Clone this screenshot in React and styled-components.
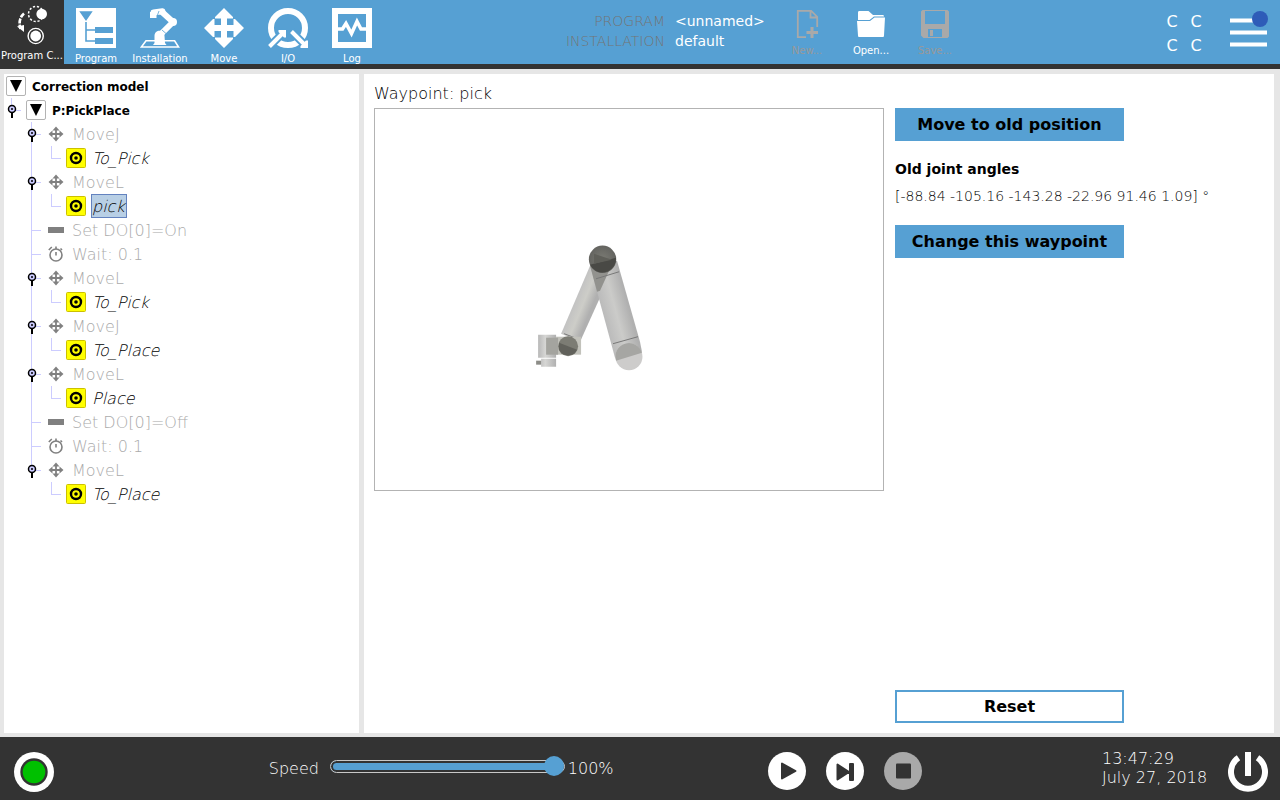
import React, { useState } from 'react';
import styled, { createGlobalStyle } from 'styled-components';

const BLUE = '#56a0d3';
const DARK = '#333333';
const LIGHT_FONT = "'DejaVu Sans Light', 'DejaVu Sans', Verdana, sans-serif";

const GlobalStyle = createGlobalStyle`
  * { box-sizing: border-box; }
  body {
    margin: 0;
    font-family: 'DejaVu Sans', Verdana, sans-serif;
    font-size: 16px;
    color: #000;
    background: #e6e6e6;
  }
  button {
    font-family: inherit;
    padding: 0;
    border: none;
    background: none;
    cursor: pointer;
  }
  svg { display: block; flex-shrink: 0; }
`;

const Screen = styled.div`
  display: flex;
  flex-direction: column;
  min-height: 100vh;
`;

/* header */

const Header = styled.header`
  display: flex;
  background: ${BLUE};
  border-bottom: 5px solid ${DARK};
  color: #fff;
`;

const Tabs = styled.nav`
  display: flex;
`;

const Tab = styled.button`
  display: flex;
  flex-direction: column;
  align-items: center;
  width: 64px;
  height: 64px;
  padding-top: ${props => (props.$active ? 5 : 8)}px;
  background: ${props => (props.$active ? DARK : 'transparent')};
  color: #fff;
  font-size: 10px;
  line-height: 22px;
  white-space: nowrap;
`;

const FileArea = styled.div`
  flex: 1;
  display: flex;
  justify-content: center;
`;

const FileInfo = styled.dl`
  display: grid;
  grid-template-columns: 96px 100px;
  column-gap: 10px;
  grid-auto-rows: 20px;
  margin: 0;
  padding-top: 11px;
  font-size: 14px;
  line-height: 20px;
`;

const InfoName = styled.dt`
  justify-self: end;
  color: #747474;
  font-family: ${LIGHT_FONT};
  font-weight: 200;
`;

const InfoValue = styled.dd`
  margin: 0;
`;

const FileButton = styled.button`
  display: flex;
  flex-direction: column;
  align-items: center;
  width: 64px;
  padding-top: 10px;
  color: ${props => (props.disabled ? '#999999' : '#fff')};
  font-size: 10px;
  line-height: 24px;
`;

const Checksum = styled.div`
  display: grid;
  grid-template-columns: 24px 24px;
  grid-auto-rows: 24px;
  align-content: center;
  justify-content: center;
  width: 64px;
  padding-top: 3px;
  text-align: center;
  line-height: 24px;
`;

const MenuButton = styled.button`
  width: 64px;
  height: 64px;
`;

/* main area */

const Main = styled.main`
  flex: 1;
  display: flex;
  gap: 5px;
  padding: 5px 6px 4px 4px;
`;

const TreePanel = styled.ul`
  flex: 0 0 355px;
  margin: 0;
  padding: 0 2px;
  list-style: none;
  background: #fff;
`;

const TreeRow = styled.li`
  display: flex;
  align-items: center;
  height: 24px;
`;

const IconSlot = styled.span`
  display: flex;
  align-items: center;
  justify-content: center;
  width: 20px;
  height: 20px;
  margin-right: 5px;
`;

const Toggle = styled.button`
  display: flex;
  align-items: center;
  justify-content: center;
  width: 20px;
  height: 20px;
  border: 1px solid #b3b3b3;
  border-radius: 2px;
`;

const NodeLabel = styled.span`
  padding: 2px 1px 0 0;
  border: 1px solid ${props => (props.$selected ? '#6382bf' : 'transparent')};
  background: ${props => (props.$selected ? '#b8cfe5' : 'transparent')};
  color: ${props => (props.$kind === 'command' ? '#aaaaaa' : '#000')};
  font-family: ${props => (props.$kind === 'folder' ? 'inherit' : LIGHT_FONT)};
  font-size: ${props => (props.$kind === 'folder' ? 12 : 16)}px;
  font-weight: ${props => (props.$kind === 'folder' ? 700 : 200)};
  font-style: ${props => (props.$kind === 'waypoint' ? 'italic' : 'normal')};
  line-height: 20px;
  white-space: nowrap;
`;

const Detail = styled.section`
  flex: 1;
  display: grid;
  grid-template-columns: minmax(0, 1fr) 379px;
  grid-template-rows: 34px 1fr;
  column-gap: 11px;
  padding: 0 0 10px 10px;
  background: #fff;
`;

const Title = styled.h1`
  grid-column: 1 / -1;
  margin: 0;
  font-family: ${LIGHT_FONT};
  font-size: 16px;
  font-weight: 200;
  line-height: 40px;
`;

const Viewer = styled.div`
  align-self: start;
  aspect-ratio: 4 / 3;
  border: 1px solid #b3b3b3;

  svg { width: 100%; height: 100%; }
`;

const Actions = styled.div`
  display: flex;
  flex-direction: column;
  align-items: flex-start;
`;

const ActionButton = styled.button`
  width: 229px;
  height: 33px;
  border: 2px solid ${BLUE};
  background: ${props => (props.$outline ? '#fff' : BLUE)};
  color: #000;
  font-size: 16px;
  font-weight: 700;
`;

const JointAngles = styled.div`
  padding: 18px 0 19px;
  font-size: 14px;
  line-height: 20px;

  h2 { margin: 0 0 7px; font-size: 14px; }
  p { margin: 0; font-family: ${LIGHT_FONT}; font-weight: 200; }
`;

const ResetSlot = styled.div`
  margin-top: auto;
`;

/* footer */

const Footer = styled.footer`
  display: grid;
  grid-template-columns: 21% 39% 1fr 178px;
  align-items: center;
  height: 63px;
  padding-top: 6px;
  background: ${DARK};
  color: #fff;
  font-family: ${LIGHT_FONT};
  font-weight: 200;
`;

const StatusButton = styled.button`
  width: 40px;
  height: 40px;
  margin-left: 14px;
`;

const SpeedControl = styled.div`
  display: flex;
  align-items: center;
  height: 40px;
  padding-bottom: 11px;

  output { padding: 4px 0 0 3px; }
  label { width: 61px; padding-top: 4px; }
`;

const Slider = styled.input`
  appearance: none;
  width: 235px;
  height: 20px;
  margin: 0;
  background: transparent;

  &::-webkit-slider-runnable-track {
    height: 13px;
    border: 1px solid #c8c8c8;
    border-radius: 7px;
    background: linear-gradient(${BLUE}, ${BLUE}) no-repeat left / ${props => props.value}% 100% ${DARK};
    box-shadow: inset 0 0 0 2px ${DARK};
  }

  &::-webkit-slider-thumb {
    appearance: none;
    width: 20px;
    height: 20px;
    margin-top: -5px;
    border-radius: 50%;
    background: ${BLUE};
  }
`;

const Playback = styled.div`
  display: flex;
  gap: 20px;
  padding-bottom: 2px;
`;

const RoundButton = styled.button`
  width: 38px;
  height: 38px;
  border-radius: 50%;
  background: ${props => (props.disabled ? '#a9a9a9' : '#fff')};
`;

const Clock = styled.div`
  display: flex;
  justify-content: space-between;
  align-items: center;
  padding-right: 12px;

  time { padding-bottom: 8px; line-height: 19px; white-space: nowrap; }
`;

/* icons */

const CorrectionIcon = () => (
  <svg width="40" height="40" viewBox="0 0 40 40" fill="none" stroke="#fff">
    <circle cx="24" cy="9" r="7.5" strokeWidth="1.5" strokeDasharray="2.2 1.8" />
    <circle cx="29.7" cy="9" r="5.3" fill="#fff" stroke="none" />
    <circle cx="23.7" cy="31" r="7.6" strokeWidth="1.4" />
    <circle cx="23.7" cy="31" r="5.4" fill="#fff" stroke="none" />
    <path d="M12 8.5C8 12 6.500 17 8.5 24" strokeWidth="2.6" strokeDasharray="5 1.2" />
    <path d="M5 21.500l7 5.500V20z" fill="#fff" stroke="none" />
  </svg>
);

const ProgramIcon = () => (
  <svg width="40" height="40" viewBox="0 0 40 40">
    <path fill="#fff" d="M0 0h40v40H0z" />
    <path fill={BLUE} d="M3.3 3.3h13.4L10 13zM19 19h18v6H19zM19 30h18v6H19z" />
    <path fill="none" stroke={BLUE} strokeWidth="1.6" d="M10 14v19h9M10 22h9" />
  </svg>
);

const InstallationIcon = () => (
  <svg width="40" height="40" viewBox="0 0 40 40">
    <path fill="none" stroke="#fff" strokeWidth="1.6" d="M6 32.8h28.6l4 6.2H1.4z" />
    <path fill="#fff" d="M14.500 28c0-7 10-7 10 0l.5 7 1.500 2H13l1.500-2z" />
    <path fill="none" stroke="#fff" strokeWidth="6" strokeLinecap="round" d="M13.500 4.500l9-1.200" />
    <path fill="none" stroke="#fff" strokeWidth="6" strokeLinejoin="round" d="M22 4l11 10-13 13" />
    <circle cx="33" cy="14" r="4" fill="#fff" />
    <path fill="#fff" d="M10 4h6.500v6H10z" />
    <path stroke={BLUE} strokeWidth=".8" d="M17.500 7l1.500-4M22 22l4 3.500" />
  </svg>
);

const MoveIcon = () => (
  <svg width="40" height="40" viewBox="0 0 40 40" fill="#fff">
    <path d="M20 0l9 9v1.500h-6V17h6.500v-6H31l9 9-9 9h-1.500v-6H23v6.500h6V31l-9 9-9-9v-1.500h6V23h-6.500v6H9l-9-9 9-9h1.500v6H17v-6.500h-6V9z" />
  </svg>
);

const IoIcon = () => (
  <svg width="40" height="40" viewBox="0 0 40 40" fill="none">
    <circle cx="20" cy="20" r="17" stroke="#fff" strokeWidth="6" />
    <path stroke={BLUE} strokeWidth="8" d="M0 40l17-17M23 23l17 17" />
    <path stroke="#fff" strokeWidth="4" d="M1.500 38.500L15 25M23.500 23.500L37 37" />
    <path fill="#fff" d="M10.500 22H18v7.500h-2l-5.500-5.500zM40 32.500V40h-7.500v-2l5.500-5.500z" />
  </svg>
);

const LogIcon = () => (
  <svg width="40" height="40" viewBox="0 0 40 40" fill="none" stroke="#fff">
    <path strokeWidth="6" d="M3 3h34v34H3z" />
    <path strokeWidth="3.5" d="M5 21h5.500l3.500-5.500 5.500 10L25 13.500l4 7.500h6" />
  </svg>
);

const NewIcon = () => (
  <svg width="28" height="29" viewBox="0 0 28 29" fill="none" stroke="#a9a9a9" strokeWidth="1.8">
    <path d="M13 27.200H4.800V.9h13.400l6 6V17M17.500 1v6.500H24" />
    <path strokeWidth="3" d="M19 17v11M13.500 22.500H25" />
  </svg>
);

const OpenIcon = () => (
  <svg width="28" height="29" viewBox="0 0 28 29" fill="#fff">
    <path d="M1 10V2.500C1 1.500 1.500 1 2.500 1h9l4.500 4h9.500c1 0 1.500.5 1.500 1.500H17l-4.500 3.500z" />
    <path d="M0 11h13l4.500-3.500H28L27 25.500c0 1-.5 1.500-1.500 1.500h-23C1.500 27 1 26.500 1 25.500z" />
  </svg>
);

const SaveIcon = () => (
  <svg width="28" height="29" viewBox="0 0 28 29">
    <path fill="#a9a9a9" fillRule="evenodd" d="M1.500 0h25L28 1.500v25L26.500 28H2.500L0 25.500v-24zM4 1v13h20V1zM7 19v8h14v-8zM9 20h3v6H9z" />
  </svg>
);

const MenuIcon = () => (
  <svg width="64" height="64" viewBox="0 0 64 64">
    <path stroke="#fff" strokeWidth="4" d="M14 20.500h37M14 32.500h37M14 44.500h37" />
    <circle cx="44" cy="19" r="8" fill="#2e5cb8" />
  </svg>
);

const ArrowDown = () => (
  <svg width="14" height="12" viewBox="0 0 14 12">
    <path d="M1 0h12L7 12z" />
  </svg>
);

const SmallMoveIcon = () => (
  <svg width="16" height="16" viewBox="0 0 16 16">
    <path stroke="#808080" strokeWidth="1.8" d="M8 2v12M2 8h12" />
    <path fill="#808080" d="M8 .5l3.500 4h-7zM8 15.500l3.500-4h-7zM.5 8l4-3.500v7zM15.500 8l-4-3.500v7z" />
  </svg>
);

const SetIcon = () => (
  <svg width="16" height="16" viewBox="0 0 16 16">
    <path fill="#808080" d="M0 5h16v6H0z" />
  </svg>
);

const WaitIcon = () => (
  <svg width="16" height="16" viewBox="0 0 16 16" fill="none" stroke="#808080" strokeWidth="1.6">
    <circle cx="8" cy="9" r="6" />
    <path d="M8 .5V3M8 6v3.500M.8 4l3-3M12.500 2.500L14 4" />
  </svg>
);

const WaypointIcon = () => (
  <svg width="20" height="20" viewBox="0 0 20 20">
    <rect x=".5" y=".5" width="19" height="19" rx="1" fill="#ffff00" stroke="#ccc000" />
    <circle cx="10" cy="10" r="5" fill="none" stroke="#000" strokeWidth="2.4" />
    <circle cx="10" cy="10" r="1.8" />
  </svg>
);

const PlayIcon = () => (
  <svg width="38" height="38" viewBox="0 0 38 38" fill={DARK} stroke={DARK} strokeLinejoin="round">
    <path strokeWidth="2" d="M14 11.500v15L27.500 19z" />
  </svg>
);

const StepIcon = () => (
  <svg width="38" height="38" viewBox="0 0 38 38" fill={DARK} stroke={DARK} strokeLinejoin="round">
    <path strokeWidth="2" d="M11.500 12.500v15L23 20zM24 12h3v16h-3z" />
  </svg>
);

const StopIcon = () => (
  <svg width="38" height="38" viewBox="0 0 38 38" fill={DARK}>
    <rect x="12" y="11.5" width="15" height="15" rx="1" />
  </svg>
);

const PowerIcon = () => (
  <svg width="40" height="40" viewBox="0 0 40 40" fill="none" stroke="#fff" strokeWidth="6">
    <path d="M10.500 5.700a17 17 0 1 0 19 0M20 0v24" />
  </svg>
);

const StatusIcon = () => (
  <svg width="40" height="40" viewBox="0 0 40 40">
    <circle cx="20" cy="20" r="20" fill="#fff" />
    <circle cx="20" cy="20" r="13.7" fill={DARK} />
    <circle cx="20" cy="20" r="11.3" fill="#00c000" />
  </svg>
);

const RobotArm = () => (
  <svg viewBox="0 0 508 381" role="img" aria-label="Robot at the old position">
    <defs>
      <linearGradient id="upper" gradientUnits="userSpaceOnUse" x1="227" y1="203" x2="253" y2="196">
        <stop offset="0" stopColor="#bababa" />
        <stop offset=".5" stopColor="#cbcbc9" />
        <stop offset="1" stopColor="#b0b0b0" />
      </linearGradient>
      <linearGradient id="fore" gradientUnits="userSpaceOnUse" x1="199" y1="193" x2="216" y2="200">
        <stop offset="0" stopColor="#c2c2c2" />
        <stop offset=".5" stopColor="#cdcdc8" />
        <stop offset="1" stopColor="#b0b0b0" />
      </linearGradient>
      <linearGradient id="tool">
        <stop offset="0" stopColor="#b8b8b8" />
        <stop offset=".4" stopColor="#d6d6d4" />
        <stop offset="1" stopColor="#b0b0b0" />
      </linearGradient>
      <radialGradient id="joint">
        <stop offset="0" stopColor="#7b7b74" />
        <stop offset="1" stopColor="#646460" />
      </radialGradient>
    </defs>
    <path fill="url(#fore)" d="M215 157l23 3-33 73-19-8z" />
    <path fill="url(#upper)" d="M215 157l27-5 23 81 2 10-27 6z" />
    <path fill="#92928e" d="M215 157l7 26 3-1 10-22z" />
    <circle cx="254" cy="248" r="13.5" fill="#cdcccb" />
    <path fill="#a6a6a3" d="M241 252a13.500 13.500 0 0 1 26-8z" />
    <circle cx="227.5" cy="150.5" r="13.7" fill="url(#joint)" />
    <path fill="#494945" d="M215 156l26-7a13.700 13.700 0 0 1-24 10z" />
    <path fill="#5f5f59" d="M219 145l18 6-18 4z" />
    <path stroke="#777" strokeWidth="1" d="M221 170l23-7M238 235l25-7M189 225l16 6" />
    <path fill="#c2c2bb" d="M181 228h25v18h-25z" />
    <path fill="url(#tool)" d="M163 226h18v23h-18zM166 250h15v8h-15z" />
    <path fill="#a4a49f" d="M171 229h12v17h-12z" />
    <circle cx="193" cy="237.5" r="10" fill="#7c7c74" />
    <path fill="#61615b" d="M184 234l18 7a10 10 0 0 1-18 0z" />
    <path fill="#8c8c87" d="M161 252h5v4h-5z" />
  </svg>
);

/* program tree */

const nodes = [
  { id: 1, depth: 0, kind: 'folder', label: 'Correction model' },
  { id: 2, depth: 1, kind: 'folder', label: 'P:PickPlace' },
  { id: 3, depth: 2, kind: 'command', icon: 'move', label: 'MoveJ' },
  { id: 4, depth: 3, kind: 'waypoint', label: 'To_Pick' },
  { id: 5, depth: 2, kind: 'command', icon: 'move', label: 'MoveL' },
  { id: 6, depth: 3, kind: 'waypoint', label: 'pick' },
  { id: 7, depth: 2, kind: 'command', icon: 'set', label: 'Set DO[0]=On' },
  { id: 8, depth: 2, kind: 'command', icon: 'wait', label: 'Wait: 0.1' },
  { id: 9, depth: 2, kind: 'command', icon: 'move', label: 'MoveL' },
  { id: 10, depth: 3, kind: 'waypoint', label: 'To_Pick' },
  { id: 11, depth: 2, kind: 'command', icon: 'move', label: 'MoveJ' },
  { id: 12, depth: 3, kind: 'waypoint', label: 'To_Place' },
  { id: 13, depth: 2, kind: 'command', icon: 'move', label: 'MoveL' },
  { id: 14, depth: 3, kind: 'waypoint', label: 'Place' },
  { id: 15, depth: 2, kind: 'command', icon: 'set', label: 'Set DO[0]=Off' },
  { id: 16, depth: 2, kind: 'command', icon: 'wait', label: 'Wait: 0.1' },
  { id: 17, depth: 2, kind: 'command', icon: 'move', label: 'MoveL' },
  { id: 18, depth: 3, kind: 'waypoint', label: 'To_Place' },
];

const lastCommand = nodes.filter(n => n.depth === 2).pop().id;

const commandIcons = {
  move: <SmallMoveIcon />,
  set: <SetIcon />,
  wait: <WaitIcon />,
};

const Branches = ({ node }) => {
  const { id, depth } = node;
  if (depth === 0) return null;
  const x = depth * 20 - 14;
  const end = depth === 2 && id !== lastCommand ? 24 : 12;
  const hasHandle = depth === 1 || node.icon === 'move';
  return (
    <svg width={depth * 20} height="24" fill="none" stroke="#ccccff">
      <path d={`M${x - 0.5} 0V${end}M${x - 1} 12.5h10`} />
      {depth === 3 && id < lastCommand && <path d="M25.5 0v24" />}
      {hasHandle && (
        <g stroke="#000">
          <path strokeWidth="2" d={`M${x} 14v6`} />
          <circle cx={x} cy="11" r="3.5" fill="#ccccff" strokeWidth="1.5" />
          <circle cx={x} cy="11" r="1" fill="#000" stroke="none" />
        </g>
      )}
    </svg>
  );
};

const NodeIcon = ({ node }) => {
  if (node.kind === 'folder') {
    return <Toggle aria-label={`Collapse ${node.label}`}><ArrowDown /></Toggle>;
  }
  return node.kind === 'waypoint' ? <WaypointIcon /> : commandIcons[node.icon];
};

const tabs = [
  { label: 'Program C...', icon: <CorrectionIcon />, active: true },
  { label: 'Program', icon: <ProgramIcon /> },
  { label: 'Installation', icon: <InstallationIcon /> },
  { label: 'Move', icon: <MoveIcon /> },
  { label: 'I/O', icon: <IoIcon /> },
  { label: 'Log', icon: <LogIcon /> },
];

const App = () => {
  const [selected, setSelected] = useState(6);
  const [speed, setSpeed] = useState(100);

  return (
    <Screen>
      <GlobalStyle />
      <Header>
        <Tabs>
          {tabs.map(tab => (
            <Tab key={tab.label} $active={tab.active}>
              {tab.icon}
              {tab.label}
            </Tab>
          ))}
        </Tabs>
        <FileArea>
          <FileInfo>
            <InfoName>PROGRAM</InfoName>
            <InfoValue>&lt;unnamed&gt;</InfoValue>
            <InfoName>INSTALLATION</InfoName>
            <InfoValue>default</InfoValue>
          </FileInfo>
          <FileButton disabled><NewIcon />New...</FileButton>
          <FileButton><OpenIcon />Open...</FileButton>
          <FileButton disabled><SaveIcon />Save...</FileButton>
        </FileArea>
        <Checksum>
          <span>C</span>
          <span>C</span>
          <span>C</span>
          <span>C</span>
        </Checksum>
        <MenuButton aria-label="Menu"><MenuIcon /></MenuButton>
      </Header>

      <Main>
        <TreePanel>
          {nodes.map(node => (
            <TreeRow key={node.id} onClick={() => setSelected(node.id)}>
              <Branches node={node} />
              <IconSlot><NodeIcon node={node} /></IconSlot>
              <NodeLabel $kind={node.kind} $selected={node.id === selected}>{node.label}</NodeLabel>
            </TreeRow>
          ))}
        </TreePanel>

        <Detail>
          <Title>Waypoint: pick</Title>
          <Viewer><RobotArm /></Viewer>
          <Actions>
            <ActionButton>Move to old position</ActionButton>
            <JointAngles>
              <h2>Old joint angles</h2>
              <p>[-88.84 -105.16 -143.28 -22.96 91.46 1.09] °</p>
            </JointAngles>
            <ActionButton>Change this waypoint</ActionButton>
            <ResetSlot>
              <ActionButton $outline>Reset</ActionButton>
            </ResetSlot>
          </Actions>
        </Detail>
      </Main>

      <Footer>
        <StatusButton aria-label="Robot status"><StatusIcon /></StatusButton>
        <SpeedControl>
          <label htmlFor="speed">Speed</label>
          <Slider
            id="speed"
            type="range"
            min="0"
            max="100"
            value={speed}
            onChange={e => setSpeed(e.target.value)}
          />
          <output htmlFor="speed">{speed}%</output>
        </SpeedControl>
        <Playback>
          <RoundButton aria-label="Play"><PlayIcon /></RoundButton>
          <RoundButton aria-label="Step"><StepIcon /></RoundButton>
          <RoundButton aria-label="Stop" disabled><StopIcon /></RoundButton>
        </Playback>
        <Clock>
          <time dateTime="2018-07-27T13:47:29">
            13:47:29<br />
            July 27, 2018
          </time>
          <button aria-label="Power"><PowerIcon /></button>
        </Clock>
      </Footer>
    </Screen>
  );
};

export default App;
